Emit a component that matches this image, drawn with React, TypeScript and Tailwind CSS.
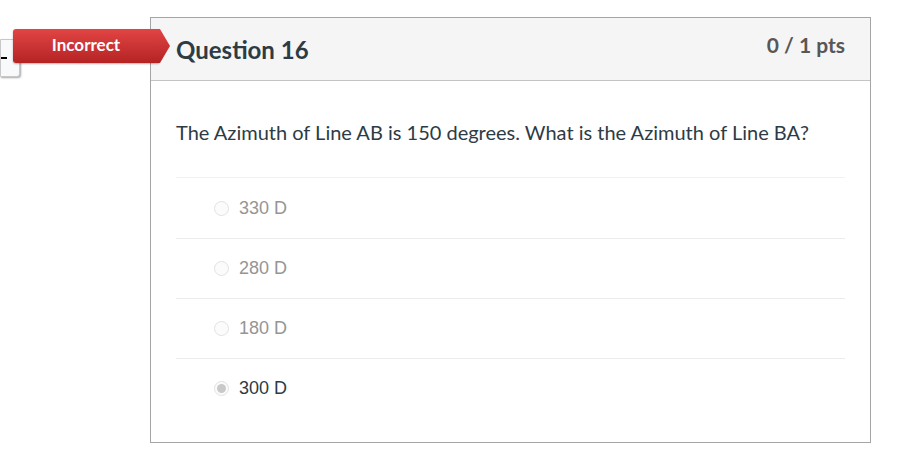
import React from 'react';

const answers = [
  { label: '330 D', selected: false },
  { label: '280 D', selected: false },
  { label: '180 D', selected: false },
  { label: '300 D', selected: true },
];

function Radio({ selected }: { selected: boolean }) {
  return (
    <span className="flex h-[15px] w-[15px] shrink-0 items-center justify-center rounded-full border border-[#e2e2e2] bg-[#fbfbfb]">
      {selected && <span className="h-[9px] w-[9px] rounded-full bg-[#c9c9c9]" />}
    </span>
  );
}

export default function App() {
  return (
    <div className="min-h-[472px] w-[897px] bg-white pt-[17px] font-['Lato',sans-serif] text-[#2d3b45]">
      <div className="relative ml-[150px] w-[721px] border border-[#a5a5a5]">
        {/* left edge flag button */}
        <div className="absolute left-[-151px] top-[21px] flex h-[38px] w-[20px] items-center rounded-r-[3px] border border-[#c8c8c8] bg-[#f7f9fb] shadow-[1px_1px_2px_rgba(0,0,0,0.35)]">
          <span className="h-[2px] w-[6px] bg-black" />
        </div>

        {/* incorrect banner */}
        <div className="absolute left-[-138px] top-[11px] flex h-[34px] items-center">
          <div className="flex h-[34px] w-[146px] items-center justify-center rounded-l-[3px] bg-gradient-to-b from-[#e24444] to-[#b52323] shadow-[0_1px_2px_rgba(0,0,0,0.3)]">
            <span className="pb-[2px] text-[17px] font-bold text-white">Incorrect</span>
          </div>
          <svg width="12" height="34" viewBox="0 0 12 34" className="-ml-px">
            <defs>
              <linearGradient id="tip" x1="0" y1="0" x2="0" y2="1">
                <stop offset="0" stopColor="#e24444" />
                <stop offset="1" stopColor="#b52323" />
              </linearGradient>
            </defs>
            <polygon points="0,0 2,0 12,17 2,34 0,34" fill="url(#tip)" />
          </svg>
        </div>

        <div className="flex h-[63px] items-start justify-between border-b border-[#c4c4c4] bg-[#f5f5f5] px-[25px]">
          <h2 className="pt-[17px] text-[24px] font-bold leading-[30px]">Question 16</h2>
          <div className="pt-[13px] text-[21px] font-bold leading-[28px] text-[#575757]">0 / 1 pts</div>
        </div>

        <div className="px-[25px] pb-[24px]">
          <p className="pt-[37px] text-[20px] leading-[28px]">
            The Azimuth of Line AB is 150 degrees. What is the Azimuth of Line BA?
          </p>
          <div className="mt-[31px]">
            {answers.map((a) => (
              <div
                key={a.label}
                className="flex h-[60px] items-center gap-[10px] border-t border-[#ececec] pl-[38px] first:h-[61px] first:border-[#f1f1f1]"
              >
                <Radio selected={a.selected} />
                <span
                  className={`font-['Liberation_Sans',sans-serif] text-[18px] ${
                    a.selected ? 'text-[#2d3b45]' : 'text-[#959595]'
                  }`}
                >
                  {a.label}
                </span>
              </div>
            ))}
          </div>
        </div>
      </div>
    </div>
  );
}
